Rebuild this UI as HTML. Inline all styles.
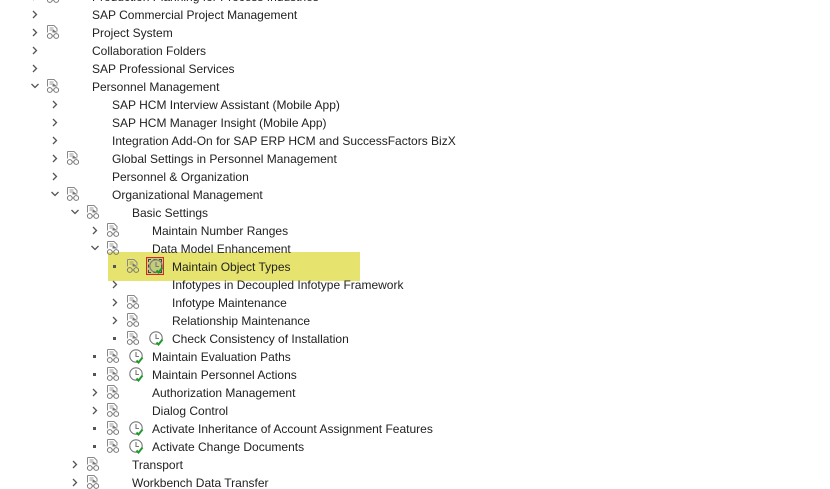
<!DOCTYPE html>
<html><head><meta charset="utf-8">
<style>
html,body{margin:0;padding:0;background:#fff;width:830px;height:489px;overflow:hidden;position:relative;font-family:"Liberation Sans",sans-serif;font-size:12px;color:#222}
.r{position:absolute;left:0;height:18px;width:830px}
.t{position:absolute;top:2px;white-space:nowrap;line-height:16px}
svg{position:absolute}
#hl{position:absolute;left:108px;top:252px;width:252px;height:29px;background:#e6e46e}
</style></head><body>
<div id="hl"></div>
<script>
var rows=[
[-4,0,'a',1,0,'Production Planning for Process Industries'],
[14,0,'a',0,0,'SAP Commercial Project Management'],
[32,0,'a',1,0,'Project System'],
[50,0,'a',0,0,'Collaboration Folders'],
[68,0,'a',0,0,'SAP Professional Services'],
[86,0,'d',1,0,'Personnel Management'],
[104,1,'a',0,0,'SAP HCM Interview Assistant (Mobile App)'],
[122,1,'a',0,0,'SAP HCM Manager Insight (Mobile App)'],
[140,1,'a',0,0,'Integration Add-On for SAP ERP HCM and SuccessFactors BizX'],
[158,1,'a',1,0,'Global Settings in Personnel Management'],
[176,1,'a',0,0,'Personnel & Organization'],
[194,1,'d',1,0,'Organizational Management'],
[212,2,'d',1,0,'Basic Settings'],
[230,3,'a',1,0,'Maintain Number Ranges'],
[248,3,'d',1,0,'Data Model Enhancement'],
[266,4,'b',1,2,'Maintain Object Types'],
[284,4,'a',0,0,'Infotypes in Decoupled Infotype Framework'],
[302,4,'a',1,0,'Infotype Maintenance'],
[320,4,'a',1,0,'Relationship Maintenance'],
[338,4,'b',1,1,'Check Consistency of Installation'],
[356,3,'b',1,1,'Maintain Evaluation Paths'],
[374,3,'b',1,1,'Maintain Personnel Actions'],
[392,3,'a',1,0,'Authorization Management'],
[410,3,'a',1,0,'Dialog Control'],
[428,3,'b',1,1,'Activate Inheritance of Account Assignment Features'],
[446,3,'b',1,1,'Activate Change Documents'],
[464,2,'a',1,0,'Transport'],
[482,2,'a',1,0,'Workbench Data Transfer']];
var doc='<path d="M1.5 1.5h6.5l3 3v3" fill="none" stroke="#888" stroke-width="1"/><path d="M1.5 1.5v7" stroke="#888"/><path d="M3.5 4h4M3.5 6h2.5" stroke="#999"/><path d="M6.5 5l5 3.5h-5z" fill="#777"/><circle cx="3.8" cy="12" r="2.4" fill="none" stroke="#777"/><circle cx="10.2" cy="12" r="2.4" fill="none" stroke="#777"/><path d="M6.2 12h1.6" stroke="#777"/>';
var clk='<circle cx="8" cy="8" r="6.2" fill="none" stroke="#777" stroke-width="1.1"/><path d="M8 4v4.5h3" fill="none" stroke="#777" stroke-width="1.1"/><path d="M8.5 12.5l2 2 4-5" fill="none" stroke="#1f9a2a" stroke-width="2"/>';
var h='';
rows.forEach(function(r){
 var y=r[0],L=r[1]*20,s='<div class="r" style="top:'+(y-9)+'px">';
 var ax=31+L;
 if(r[2]=='a') s+='<svg style="left:'+ax+'px;top:5px" width="8" height="9"><path d="M2 1l3.5 3.5-3.5 3.5" fill="none" stroke="#555" stroke-width="1.3"/></svg>';
 else if(r[2]=='d') s+='<svg style="left:'+(ax-1)+'px;top:5px" width="10" height="8"><path d="M1.5 2l3.5 3.5 3.5-3.5" fill="none" stroke="#555" stroke-width="1.3"/></svg>';
 else s+='<div style="position:absolute;left:'+(ax+2)+'px;top:8px;width:3px;height:3px;background:#555"></div>';
 if(r[3]) s+='<svg style="left:'+(46+L)+'px;top:1px" width="14" height="16">'+doc+'</svg>';
 if(r[4]==1) s+='<svg style="left:'+(68+L)+'px;top:1px" width="16" height="16">'+clk+'</svg>';
 if(r[4]==2) s+='<div style="position:absolute;left:146px;top:0px;width:18px;height:18px;border:1px solid #d22;box-sizing:border-box;background:#c3cc7a"><div style="position:absolute;left:1px;top:1px;right:1px;bottom:1px;border:1px dashed #444"></div></div><svg style="left:148px;top:1px" width="16" height="16">'+clk+'</svg>';
 var tx=92+L;
 s+='<div class="t" style="left:'+tx+'px">'+r[5].replace('&','&amp;')+'</div></div>';
 h+=s;
});
document.write(h);
</script>
</body></html>
